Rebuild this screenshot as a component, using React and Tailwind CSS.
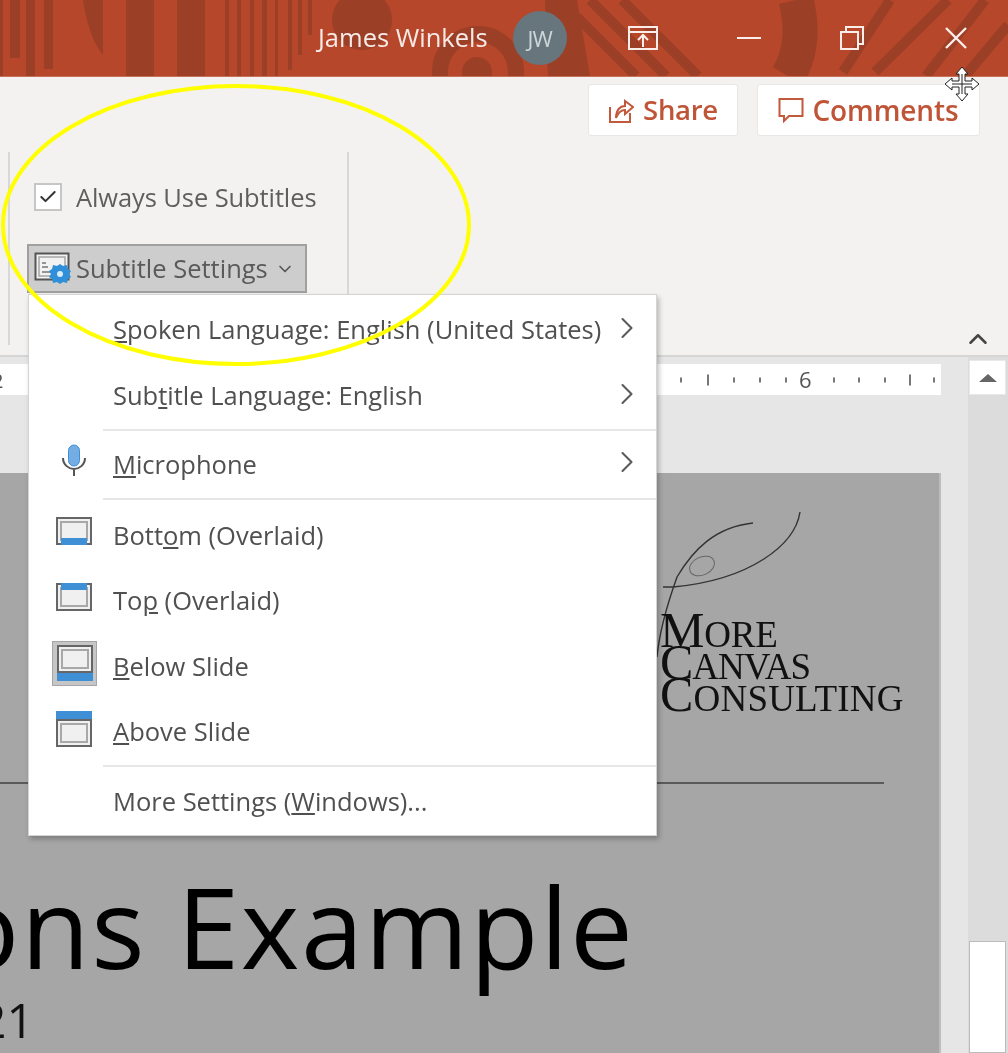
import { ChevronRight, ChevronDown, ChevronUp, Check } from 'lucide-react'

const UI = "font-['Open_Sans','Noto_Sans',sans-serif]"

const TICKS = [
  { x: 680, h: 'h-[5px]' },
  { x: 707, h: 'h-[11px]' },
  { x: 733, h: 'h-[5px]' },
  { x: 759, h: 'h-[5px]' },
  { x: 785, h: 'h-[5px]' },
  { x: 833, h: 'h-[5px]' },
  { x: 858, h: 'h-[5px]' },
  { x: 884, h: 'h-[5px]' },
  { x: 909, h: 'h-[11px]' },
  { x: 933, h: 'h-[5px]' },
]

function TitlePattern() {
  const bars = [
    [0, 3, 76], [10, 10, 58], [26, 9, 76], [44, 9, 69], [126, 28, 76], [177, 28, 76],
    [225, 4, 76], [237, 4, 76], [250, 4, 76], [262, 5, 76], [275, 3, 76], [288, 4, 70],
    [298, 4, 55], [308, 4, 35],
  ]
  return (
    <svg className="absolute inset-0" width="1008" height="76" viewBox="0 0 1008 76">
      {bars.map(([x, w, h]) => (
        <rect key={x} x={x} y="0" width={w} height={h} fill="#9c3f27" />
      ))}
      <path d="M83 0H103V55C92 42 86 20 83 0Z" fill="#9c3f27" />
      <circle cx="362" cy="20" r="30" fill="#9c3f27" />
      <circle cx="478" cy="72" r="38" fill="none" stroke="#9c3f27" strokeWidth="16" />
      <circle cx="477" cy="72" r="15" fill="#9c3f27" />
      <path d="M545 0H577L590 76H548Z" fill="#9c3f27" />
      <g stroke="#9c3f27" strokeWidth="10">
        <path d="M577 17L636 76" />
        <path d="M590 0L666 76" />
        <path d="M622 0L698 76" />
      </g>
      <path d="M796 0C802 25 803 50 788 76" fill="none" stroke="#9c3f27" strokeWidth="35" />
      <g stroke="#9c3f27" strokeWidth="10">
        <path d="M843 72L890 0" />
        <path d="M875 72L948 0" />
        <path d="M926 76L985 0" />
        <path d="M965 76L1008 25" />
      </g>
    </svg>
  )
}

function WindowControls() {
  return (
    <div className="absolute inset-0 flex items-center">
      <span className="ml-[318px] text-[25.5px] text-[#f8ebe7] leading-none whitespace-nowrap">James Winkels</span>
      <div className="ml-[25px] w-[54px] h-[54px] shrink-0 rounded-full bg-[#66767c] flex items-center justify-center text-[#cfd6d8] text-[22px] tracking-[-1px]">
        JW
      </div>
      <svg className="ml-[60px] shrink-0" width="32" height="26" viewBox="0 0 32 26" fill="none" stroke="#fbeeea" strokeWidth="2">
        <rect x="2" y="2" width="28" height="22" />
        <path d="M2 7H30" />
        <path d="M16 22V11M11 15l5-5 5 5" />
      </svg>
      <svg className="ml-[78px] shrink-0" width="26" height="4" viewBox="0 0 26 4">
        <rect width="24" height="2" y="1" fill="#fbeeea" />
      </svg>
      <svg className="ml-[76px] shrink-0" width="26" height="26" viewBox="0 0 26 26" fill="none" stroke="#fbeeea" strokeWidth="2">
        <rect x="2" y="7" width="17" height="17" />
        <path d="M7 7V2H24V19H19" />
      </svg>
      <svg className="ml-[79px] shrink-0" width="24" height="24" viewBox="0 0 24 24" stroke="#fbeeea" strokeWidth="2.4">
        <path d="M2 2L22 22M22 2L2 22" />
      </svg>
    </div>
  )
}

function ShareIcon() {
  return (
    <svg width="26" height="28" viewBox="0 0 26 28" fill="none" stroke="#c2593d" strokeWidth="2">
      <path d="M2 11V26H22V17" />
      <path d="M8 22C8 14 12 10 17 10V5L25 11L17 18V14C13 14 10 17 8 22Z" />
    </svg>
  )
}

function SubtitleSettingsIcon() {
  return (
    <svg width="38" height="34" viewBox="0 0 38 34" fill="none" className="shrink-0">
      <rect x="1.5" y="1.5" width="33" height="26" fill="#f2f2f2" stroke="#555" strokeWidth="2" />
      <rect x="5" y="5" width="26" height="19" stroke="#a5a5a5" strokeWidth="1.5" />
      <path d="M8 11h4M8 15h6M8 20h10" stroke="#777" strokeWidth="1.5" />
      <path d="M26 12l3 2 4-1 1 4 3 2-2 3 2 3-3 2-1 4-4-1-3 2-3-2-4 1-1-4-3-2 2-3-2-3 3-2 1-4 4 1z" fill="#2f8fd8" />
      <circle cx="26" cy="22" r="3" fill="#d9edf9" />
    </svg>
  )
}

function LayoutIcon({ band, inset }) {
  // inset: the blue strip sits outside the inner frame and is full width
  const y = inset && band === 'top' ? 8 : 0
  const h = 28
  return (
    <svg width="36" height={inset ? 36 : 28} viewBox={`0 0 36 ${inset ? 36 : 28}`} fill="none">
      <rect x="1" y={y + 1} width="34" height={h - 2} fill="#f0f0f0" stroke="#666" strokeWidth="2" />
      <rect x="5" y={y + 5} width="26" height={h - 10} stroke="#a8a8a8" strokeWidth="2" />
      {band === 'top' && <rect x={inset ? 0 : 5} y="0" width={inset ? 36 : 26} height={inset ? 8 : 7} fill="#3f8fd6" />}
      {band === 'bottom' && (
        <rect x={inset ? 0 : 5} y={inset ? 28 : 21} width={inset ? 36 : 26} height={inset ? 8 : 7} fill="#3f8fd6" />
      )}
    </svg>
  )
}

function MicIcon() {
  return (
    <svg width="26" height="32" viewBox="0 0 26 32" fill="none">
      <rect x="7.5" y="1" width="11" height="21" rx="5.5" fill="#74ade3" stroke="#3f8fd6" />
      <path d="M2 14C2 21 8 25 13 25S24 21 24 14M13 25V32" stroke="#555" strokeWidth="2" />
    </svg>
  )
}

function MenuRow({ height, icon, arrow, children }) {
  return (
    <div className="flex items-center" style={{ height }}>
      <div className="w-[84px] flex justify-center pl-[6px] -mt-[9px] shrink-0">{icon}</div>
      <span className="text-[25.5px] leading-none text-[#505050] whitespace-nowrap">{children}</span>
      {arrow && <ChevronRight className="absolute left-[580px] -mt-[5px] text-[#5a5a5a]" size={36} strokeWidth={1.4} />}
    </div>
  )
}

const Sep = () => <div className="ml-[74px] h-[2px] bg-[#e6e6e6]" />

function SubtitleMenu() {
  return (
    <div className={`absolute left-[28px] top-[294px] w-[629px] h-[542px] bg-white border border-[#d4d4d4] shadow-[2px_3px_5px_rgba(0,0,0,0.25)] pt-[2px] ${UI}`}>
      <MenuRow height={66} arrow><u>S</u>poken Language: English (United States)</MenuRow>
      <MenuRow height={66} arrow>Sub<u>t</u>itle Language: English</MenuRow>
      <Sep />
      <MenuRow height={67} arrow icon={<MicIcon />}><u>M</u>icrophone</MenuRow>
      <Sep />
      <div className="h-[3px]" />
      <MenuRow height={65} icon={<LayoutIcon band="bottom" />}>Bott<u>o</u>m (Overlaid)</MenuRow>
      <MenuRow height={66} icon={<LayoutIcon band="top" />}>To<u>p</u> (Overlaid)</MenuRow>
      <MenuRow
        height={65}
        icon={
          <div className="w-[45px] h-[45px] shrink-0 mt-[2px] ml-[1px] bg-[#c6c6c6] border border-[#a5a5a5] flex items-center justify-center">
            <LayoutIcon band="bottom" inset />
          </div>
        }
      >
        <u>B</u>elow Slide
      </MenuRow>
      <MenuRow height={66} icon={<div className="mt-[3px]"><LayoutIcon band="top" inset /></div>}><u>A</u>bove Slide</MenuRow>
      <Sep />
      <MenuRow height={70}>More Settings (<u>W</u>indows)...</MenuRow>
    </div>
  )
}

function MoveCursor() {
  return (
    <svg className="absolute left-[944px] top-[66px]" width="36" height="36" viewBox="0 0 36 36" fill="#fff" stroke="#222" strokeWidth="1">
      <path d="M18 1L24 8H21V15H28V12L35 18L28 24V21H21V28H24L18 35L12 28H15V21H8V24L1 18L8 12V15H15V8H12Z" />
      <path d="M18 8V28M8 18H28" stroke="#222" fill="none" />
    </svg>
  )
}

export default function App() {
  return (
    <div className={`relative w-[1008px] h-[1053px] overflow-hidden flex flex-col bg-[#e6e6e6] blur-[0.4px] ${UI}`}>
      {/* Title bar */}
      <header className="relative h-[76px] shrink-0 bg-[#b7472a] border-b border-[#c9705a] box-content">
        <TitlePattern />
        <WindowControls />
      </header>

      {/* Ribbon */}
      <section className="h-[280px] shrink-0 flex items-start bg-[#f3f2f1] border-b-2 border-[#d6d6d6]">
        <div className="mt-[75px] ml-2 w-[2px] h-[193px] bg-[#d8d8d8]" />
        <div className="w-[337px] mt-[106px] flex flex-col shrink-0">
          <div className="flex items-center pl-[24px] h-[28px]">
            <div className="w-[28px] h-[28px] bg-white border-2 border-[#c6c6c6] flex items-center justify-center">
              <Check size={20} strokeWidth={2.4} className="text-[#333]" />
            </div>
            <span className="ml-[14px] mt-[2px] text-[25.5px] leading-none tracking-[-0.1px] text-[#5f5f5f] whitespace-nowrap">Always Use Subtitles</span>
          </div>
          <div className="mt-[33px] ml-[17px] w-[280px] h-[49px] bg-[#cdcdcd] border-2 border-[#a0a0a0] flex items-center pl-[5px]">
            <SubtitleSettingsIcon />
            <span className="ml-[4px] text-[25.5px] leading-none text-[#5a5a5a] whitespace-nowrap">Subtitle Settings</span>
            <ChevronDown size={20} strokeWidth={2} className="ml-[7px] text-[#555]" />
          </div>
        </div>
        <div className="mt-[75px] w-[2px] h-[193px] bg-[#d8d8d8]" />
        <div className="flex-1 h-full flex flex-col items-end">
          <div className="mt-[7px] mr-[28px] flex gap-[19px]">
            <button className="w-[150px] h-[52px] bg-white border border-[#e9e7e5] rounded-[3px] flex items-center justify-center gap-[9px] text-[#bf5437] text-[27.5px] font-semibold tracking-[-0.3px]">
              <ShareIcon />
              Share
            </button>
            <button className="w-[223px] h-[52px] bg-white border border-[#e9e7e5] rounded-[3px] flex items-center justify-center gap-[8px] text-[#bf5437] text-[28px] font-semibold tracking-[-0.1px]">
              <svg width="26" height="26" viewBox="0 0 26 26" fill="none" stroke="#c2593d" strokeWidth="2">
                <path d="M1.5 2H24.5V19H11L6 24V19H1.5Z" />
              </svg>
              Comments
            </button>
          </div>
          <ChevronUp size={30} strokeWidth={2} className="mt-auto mr-[15px] mb-[1px] text-[#444]" />
        </div>
      </section>

      {/* Document area */}
      <div className="flex-1 min-h-0 flex">
        <div className="w-[968px] flex flex-col">
          <div className="mt-[7px] mr-[27px] h-[31px] bg-white relative overflow-hidden">
            <span className="absolute left-[-8px] top-[2px] text-[20px] text-[#555]">2</span>
            {TICKS.map((t) => (
              <i key={t.x} className={`absolute w-[1.5px] top-1/2 -translate-y-1/2 bg-[#777] ${t.h}`} style={{ left: t.x }} />
            ))}
            <span className="absolute left-[799px] top-0 text-[22px] leading-[31px] text-[#555]">6</span>
          </div>

          {/* Slide */}
          <div className="mt-[78px] mr-[27px] flex-1 min-h-0 bg-[#a6a6a6] border-r-2 border-[#bdbdbd] overflow-hidden flex flex-col">
            <div className="h-[309px] shrink-0 pt-[32px] pl-[655px] text-[#111] font-['Liberation_Serif',serif]">
              <svg width="150" height="155" viewBox="0 0 150 155" fill="none" stroke="#333" className="-mb-[46px]">
                <path d="M145 7C140 40 95 75 18 82L8 82" strokeWidth="1.4" />
                <path d="M98 18C60 22 38 45 22 72C12 100 4 130 2 152" strokeWidth="1.4" />
                <ellipse cx="47" cy="61" rx="13" ry="9" transform="rotate(-25 47 61)" strokeWidth="1" stroke="#666" />
              </svg>
              <div className="relative flex flex-col pl-[5px] text-[37px] whitespace-nowrap">
                <span className="h-[32px] leading-[32px] tracking-[-0.2px]"><span className="text-[50px]">M</span>ORE</span>
                <span className="h-[32px] leading-[32px] tracking-[-1px]"><span className="text-[50px]">C</span>ANVAS</span>
                <span className="h-[32px] leading-[32px] tracking-[0.2px]"><span className="text-[50px]">C</span>ONSULTING</span>
              </div>
            </div>
            <div className="h-[2px] w-[884px] shrink-0 bg-[#5a5a5a]" />
            <div className="mt-[86px] ml-[-48px] text-[112px] leading-[112px] text-black whitespace-nowrap font-medium tracking-[1.6px]">
              ons Example
            </div>
            <div className="mt-[14px] ml-[-21px] text-[48px] leading-none text-[#111]">21</div>
          </div>
        </div>

        {/* Scrollbar */}
        <div className="flex-1 flex flex-col bg-[#dcdcdc] pl-[1px] pr-[2px]">
          <div className="mt-[3px] h-[35px] bg-white flex items-center justify-center border border-[#e8e8e8]">
            <div className="w-0 h-0 border-x-[9px] border-x-transparent border-b-[8px] border-b-[#666]" />
          </div>
          <div className="mt-auto h-[112px] bg-white border border-[#bbb]" />
        </div>
      </div>

      <SubtitleMenu />

      {/* Yellow hand-drawn circle */}
      <svg className="absolute left-0 top-0 pointer-events-none" width="480" height="380" viewBox="0 0 480 380" fill="none">
        <ellipse cx="236" cy="225" rx="233" ry="139" stroke="#ffff00" strokeWidth="4" />
      </svg>

      <MoveCursor />
    </div>
  )
}
